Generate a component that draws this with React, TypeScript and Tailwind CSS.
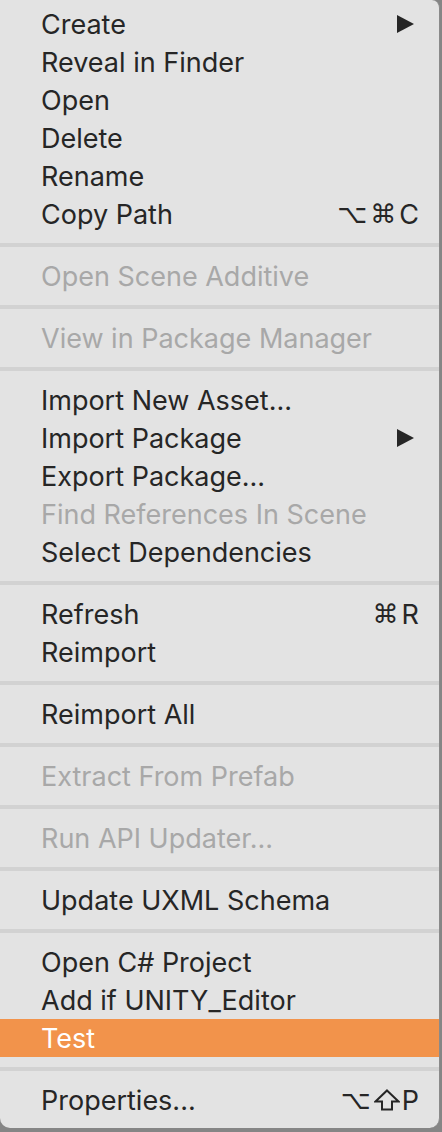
import React from "react";

type Item =
  | { type: "sep" }
  | { type: "item"; label: string; disabled?: boolean; sub?: boolean; shortcut?: string[]; active?: boolean };

const items: Item[] = [
  { type: "item", label: "Create", sub: true },
  { type: "item", label: "Reveal in Finder" },
  { type: "item", label: "Open" },
  { type: "item", label: "Delete" },
  { type: "item", label: "Rename" },
  { type: "item", label: "Copy Path", shortcut: ["⌥", "⌘", "C"] },
  { type: "sep" },
  { type: "item", label: "Open Scene Additive", disabled: true },
  { type: "sep" },
  { type: "item", label: "View in Package Manager", disabled: true },
  { type: "sep" },
  { type: "item", label: "Import New Asset..." },
  { type: "item", label: "Import Package", sub: true },
  { type: "item", label: "Export Package..." },
  { type: "item", label: "Find References In Scene", disabled: true },
  { type: "item", label: "Select Dependencies" },
  { type: "sep" },
  { type: "item", label: "Refresh", shortcut: ["⌘", "R"] },
  { type: "item", label: "Reimport" },
  { type: "sep" },
  { type: "item", label: "Reimport All" },
  { type: "sep" },
  { type: "item", label: "Extract From Prefab", disabled: true },
  { type: "sep" },
  { type: "item", label: "Run API Updater...", disabled: true },
  { type: "sep" },
  { type: "item", label: "Update UXML Schema" },
  { type: "sep" },
  { type: "item", label: "Open C# Project" },
  { type: "item", label: "Add if UNITY_Editor" },
  { type: "item", label: "Test", active: true },
  { type: "sep" },
  { type: "item", label: "Properties...", shortcut: ["⌥", "⇧", "P"] },
];

function Arrow() {
  return (
    <svg width="17" height="18" viewBox="0 0 17 18" className="block">
      <polygon points="0,0 17,9 0,18" fill="#262626" />
    </svg>
  );
}

function ShiftIcon() {
  return (
    <svg width="26" height="22" viewBox="0 0 26 22" className="block" aria-label="Shift">
      <polygon
        points="13,1.5 24.5,12.5 18,12.5 18,20.5 8,20.5 8,12.5 1.5,12.5"
        fill="none"
        stroke="#262626"
        strokeWidth="2"
        strokeLinejoin="miter"
      />
    </svg>
  );
}

function Glyph({ g }: { g: string }) {
  if (g === "⌥" || g === "⌘") {
    return (
      <span className="shrink-0 mr-[3px] text-[26px]" style={{ fontFamily: '"DejaVu Sans", sans-serif' }}>
        {g}
      </span>
    );
  }
  if (g === "⇧") {
    return (
      <span className="shrink-0 mr-[2px] flex items-center" title="⇧">
        <ShiftIcon />
      </span>
    );
  }
  return <span className="text-[27px] shrink-0">{g}</span>;
}

export default function App() {
  return (
    <div className="w-[442px] h-[1132px] bg-[#858585] overflow-hidden">
      <div
        className="w-[440px] h-[1128px] bg-[#e3e3e3] border-r border-[#8a8a8a] rounded-tr-[8px] rounded-br-[10px] rounded-bl-[10px] pt-[5px] pb-[8px] flex flex-col"
        style={{ fontFamily: 'Inter, "DejaVu Sans", sans-serif' }}
      >
        {items.map((it, i) =>
          it.type === "sep" ? (
            <div key={i} className="h-[24px] flex flex-col justify-center">
              <div className="h-[4px] bg-[#d2d2d2]" />
            </div>
          ) : (
            <div
              key={i}
              className={`h-[38px] flex items-center justify-between pl-[41px] pr-[20px] text-[27px] leading-none ${
                it.active ? "bg-[#f2934b] text-white" : it.disabled ? "text-[#a8a8a8]" : "text-[#262626]"
              }`}
            >
              <span>{it.label}</span>
              {it.sub ? (
                <span className="pr-[5px]">
                  <Arrow />
                </span>
              ) : it.shortcut ? (
                <span className="flex items-center leading-none">
                  {it.shortcut.map((g, j) => (
                    <Glyph key={j} g={g} />
                  ))}
                </span>
              ) : null}
            </div>
          )
        )}
      </div>
    </div>
  );
}
